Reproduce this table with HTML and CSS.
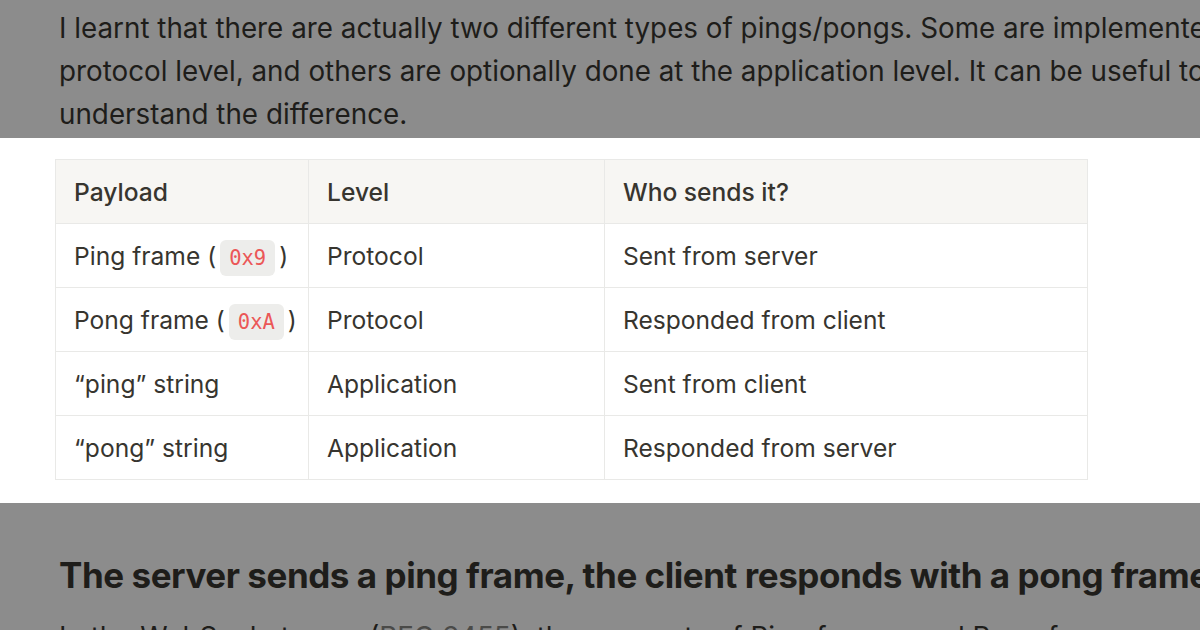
FILE: index.html
```html
<!DOCTYPE html>
<html>
<head>
<meta charset="utf-8">
<link rel="stylesheet" href="styles.css">
</head>
<body>
<div class="page">
  <section class="dim top">
    <p class="para">I learnt that there are actually two different types of pings/pongs. Some are implemented at the<br>protocol level, and others are optionally done at the application level. It can be useful to<br>understand the difference.</p>
  </section>
  <section class="focus">
    <table class="tbl">
      <colgroup>
        <col class="c1"><col class="c2"><col class="c3">
      </colgroup>
      <thead>
        <tr><th>Payload</th><th>Level</th><th>Who sends it?</th></tr>
      </thead>
      <tbody>
        <tr><td>Ping frame (<code>0x9</code>)</td><td>Protocol</td><td>Sent from server</td></tr>
        <tr><td>Pong frame (<code>0xA</code>)</td><td>Protocol</td><td>Responded from client</td></tr>
        <tr><td>“ping” string</td><td>Application</td><td>Sent from client</td></tr>
        <tr><td>“pong” string</td><td>Application</td><td>Responded from server</td></tr>
      </tbody>
    </table>
  </section>
  <section class="dim bottom">
    <h2 class="heading">The server sends a ping frame, the client responds with a pong frame</h2>
    <p class="para">In the WebSocket spec (<span class="link">RFC 6455</span>), the concepts of Ping frames and Pong frames are defined as control frames.</p>
  </section>
</div>
</body>
</html>
```

FILE: styles.css
```css
html, body {
  margin: 0;
  padding: 0;
  background: #ffffff;
}
body {
  width: 1200px;
  height: 630px;
  overflow: hidden;
  font-family: Inter, "Noto Sans", sans-serif;
  color: #37352f;
}
.page {
  display: flex;
  flex-direction: column;
  width: 1200px;
}
.dim {
  background: #8c8c8c;
  color: #1e1d1a;
  padding-left: 59px;
  white-space: nowrap;
  overflow: hidden;
}
.top {
  height: 138px;
  box-sizing: border-box;
  padding-top: 7px;
}
.para {
  margin: 0;
  font-size: 27.8px;
  line-height: 43px;
}
.focus {
  padding: 21px 0 23px 55px;
  background: #ffffff;
}
.tbl {
  border-collapse: collapse;
  table-layout: fixed;
  width: 1032px;
  font-size: 24.6px;
  color: #37352f;
}
.c1 { width: 253px; }
.c2 { width: 296px; }
.c3 { width: 483px; }
.tbl th, .tbl td {
  border: 1.5px solid #e9e9e7;
  height: 64px;
  box-sizing: border-box;
  padding: 0 18px;
  text-align: left;
  vertical-align: middle;
  white-space: nowrap;
}
.tbl th {
  background: #f7f6f3;
  font-weight: 500;
}
.tbl td {
  font-weight: 400;
}
code {
  font-family: "DejaVu Sans Mono", "Liberation Mono", monospace;
  font-size: 20.5px;
  color: #eb5757;
  background: #ededeb;
  border-radius: 6px;
  padding: 6px 9px;
  margin: 0 4px;
}
.bottom {
  flex: 1;
  height: 127px;
  padding-top: 48px;
  box-sizing: border-box;
}
.heading {
  margin: 0 0 17px 0;
  font-size: 35px;
  font-weight: 700;
  line-height: 48px;
  letter-spacing: -0.45px;
}
.link {
  color: #4a4a48;
  text-decoration: underline;
}
```
